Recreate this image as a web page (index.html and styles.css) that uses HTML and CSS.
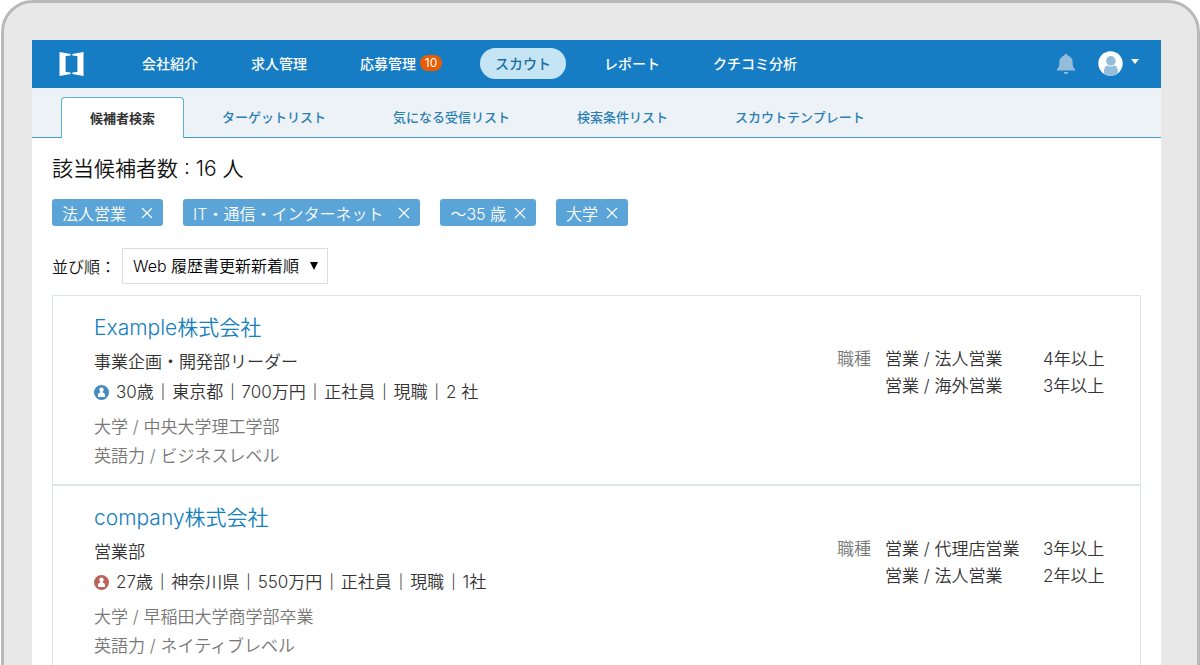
FILE: index.html
```html
<!DOCTYPE html>
<html lang="ja">
  <head>
    <title>候補者検索</title>
    <meta charset="UTF-8">
    <meta name="viewport" content="width=device-width, initial-scale=1">
    <link rel="stylesheet" href="styles.css">
  </head>
  <body>
    <div class="device">
      <div class="screen">
        <header class="topbar">
          <a class="logo" href="#" aria-label="ホーム">
            <svg width="25" height="24" viewBox="0 0 25 24" fill="#fff">
              <path d="M0.5 0 L11.6 2 V3.4 L6.6 4 V20 L11.6 20.6 V22 L0.5 24 Z"/>
              <path d="M24.5 0 L13.4 2 V3.4 L18.4 4 V20 L13.4 20.6 V22 L24.5 24 Z"/>
            </svg>
          </a>
          <nav class="nav">
            <a href="#">会社紹介</a>
            <a href="#">求人管理</a>
            <a href="#">応募管理<span class="badge">10</span></a>
            <a class="current" href="#">スカウト</a>
            <a href="#">レポート</a>
            <a href="#">クチコミ分析</a>
          </nav>
          <div class="tools">
            <button class="bell" type="button" aria-label="お知らせ">
              <svg width="20" height="22" viewBox="0 0 20 22" fill="#93bddb">
                <path d="M10 1 C11 1 11.6 1.6 11.6 2.6 C14.9 3.4 16.6 6 16.6 9.2 C16.6 13 17.2 14.6 19 16 V17.4 H1 V16 C2.8 14.6 3.4 13 3.4 9.2 C3.4 6 5.1 3.4 8.4 2.6 C8.4 1.6 9 1 10 1 Z"/>
                <path d="M7.8 19 H12.2 C12 20.4 11.2 21 10 21 C8.8 21 8 20.4 7.8 19 Z"/>
              </svg>
            </button>
            <button class="account" type="button" aria-label="アカウント">
              <svg width="25" height="25" viewBox="0 0 25 25">
                <circle cx="12.5" cy="12.5" r="12.2" fill="#fff"/>
                <circle cx="12.9" cy="9.9" r="4.8" fill="#93bddb"/>
                <path d="M6 22.7 C5.6 18 7 14.6 9.6 14.4 C11.6 15.9 14.2 15.9 16.2 14.4 C18.8 14.6 20.4 18 19.8 22.3 C16 25.3 9.6 25.5 6 22.7 Z" fill="#93bddb"/>
              </svg>
              <svg class="caret" width="8" height="5" viewBox="0 0 8 5" fill="#fff"><path d="M0 0 H8 L4 5 Z"/></svg>
            </button>
          </div>
        </header>

        <nav class="tabs">
          <a class="active" href="#">候補者検索</a>
          <a href="#">ターゲットリスト</a>
          <a href="#">気になる受信リスト</a>
          <a href="#">検索条件リスト</a>
          <a href="#">スカウトテンプレート</a>
        </nav>

        <main class="content">
          <h1>該当候補者数 : 16 人</h1>

          <div class="tags">
            <span class="tag wide">法人営業<button type="button" aria-label="法人営業を外す"><svg width="12" height="12" viewBox="0 0 12 12"><path d="M1 1 L11 11 M11 1 L1 11"/></svg></button></span>
            <span class="tag wide">IT・通信・インターネット<button type="button" aria-label="IT・通信・インターネットを外す"><svg width="12" height="12" viewBox="0 0 12 12"><path d="M1 1 L11 11 M11 1 L1 11"/></svg></button></span>
            <span class="tag">〜35 歳<button type="button" aria-label="〜35歳を外す"><svg width="12" height="12" viewBox="0 0 12 12"><path d="M1 1 L11 11 M11 1 L1 11"/></svg></button></span>
            <span class="tag">大学<button type="button" aria-label="大学を外す"><svg width="12" height="12" viewBox="0 0 12 12"><path d="M1 1 L11 11 M11 1 L1 11"/></svg></button></span>
          </div>

          <div class="sort">
            <label for="sort">並び順：</label>
            <div class="select">
              <select id="sort">
                <option>Web 履歴書更新新着順</option>
              </select>
              <svg width="8" height="8" viewBox="0 0 8 8"><path d="M0 0 H8 L4 8 Z"/></svg>
            </div>
          </div>

          <div class="list">
            <article class="card">
              <div class="person">
                <h2><a href="#">Example株式会社</a></h2>
                <p class="role">事業企画・開発部リーダー</p>
                <p class="facts">
                  <svg width="15" height="15" viewBox="0 0 15 15"><circle cx="7.5" cy="7.5" r="7.5" fill="#458bbd"/><circle cx="7.5" cy="4.7" r="2.2" fill="#fff"/><path d="M6.2 6.4 H8.8 V7.4 C10.4 7.8 11 8.8 11 10.2 V12 H4 V10.2 C4 8.8 4.6 7.8 6.2 7.4 Z" fill="#fff"/></svg>
                  <span>30歳</span><i>|</i><span>東京都</span><i>|</i><span>700万円</span><i>|</i><span>正社員</span><i>|</i><span>現職</span><i>|</i><span>2 社</span>
                </p>
                <p class="sub">大学 / 中央大学理工学部</p>
                <p class="sub">英語力 / ビジネスレベル</p>
              </div>
              <table class="jobs">
                <tr><th rowspan="2" scope="rowgroup">職種</th><td>営業 / 法人営業</td><td>4年以上</td></tr>
                <tr><td>営業 / 海外営業</td><td>3年以上</td></tr>
              </table>
            </article>

            <article class="card">
              <div class="person">
                <h2><a href="#">company株式会社</a></h2>
                <p class="role">営業部</p>
                <p class="facts">
                  <svg width="15" height="15" viewBox="0 0 15 15"><circle cx="7.5" cy="7.5" r="7.5" fill="#b9645a"/><circle cx="7.5" cy="4.7" r="2.2" fill="#fff"/><path d="M6.2 6.4 H8.8 V7.4 C10.4 7.8 11 8.8 11 10.2 V12 H4 V10.2 C4 8.8 4.6 7.8 6.2 7.4 Z" fill="#fff"/></svg>
                  <span>27歳</span><i>|</i><span>神奈川県</span><i>|</i><span>550万円</span><i>|</i><span>正社員</span><i>|</i><span>現職</span><i>|</i><span>1社</span>
                </p>
                <p class="sub">大学 / 早稲田大学商学部卒業</p>
                <p class="sub">英語力 / ネイティブレベル</p>
              </div>
              <table class="jobs">
                <tr><th rowspan="2" scope="rowgroup">職種</th><td>営業 / 代理店営業</td><td>3年以上</td></tr>
                <tr><td>営業 / 法人営業</td><td>2年以上</td></tr>
              </table>
            </article>
          </div>
        </main>
      </div>
    </div>
  </body>
</html>
```
FILE: styles.css
```css
* {
  box-sizing: border-box;
}
body {
  margin: 0;
  background: #fff;
  font-family: Inter, "Noto Sans CJK JP", sans-serif;
  font-size: 16px;
  font-weight: 350;
  color: #333;
}
a {
  text-decoration: none;
}
button {
  padding: 0;
  border: 0;
  background: none;
  cursor: pointer;
}
h1, h2, p {
  margin: 0;
  font-weight: inherit;
}
svg {
  display: block;
  flex: none;
}

/* tablet frame */
.device {
  margin-left: 1px;
  padding: 37px 36px 40px 28px;
  border: 3px solid #b9b9b9;
  border-radius: 32px;
  background: #e8e8e8;
}
.screen {
  background: #fff;
}

/* header */
.topbar {
  display: flex;
  align-items: center;
  height: 48px;
  padding: 0 22px 1px 27px;
  background: #167dc5;
}
.nav {
  display: flex;
  gap: 23px;
  margin-left: 43px;
}
.nav a {
  display: flex;
  align-items: center;
  height: 31px;
  padding: 0 15px 2px;
  border-radius: 16px;
  font-size: 14px;
  font-weight: 500;
  color: #fff;
  white-space: nowrap;
}
.nav .current {
  background: #c5e5f4;
  color: #1b6f9f;
}
.badge {
  width: 22px;
  margin-left: 4px;
  border-radius: 8px;
  background: #eb5b00;
  font-size: 12px;
  font-weight: 400;
  line-height: 16px;
  text-align: center;
}
.tools {
  display: flex;
  align-items: center;
  gap: 22px;
  margin-left: auto;
}
.account {
  display: flex;
  align-items: center;
  gap: 8px;
}
.caret {
  margin-bottom: 4px;
}

/* sub navigation */
.tabs {
  display: flex;
  align-items: flex-end;
  gap: 67px;
  height: 50px;
  padding-left: 29px;
  border-bottom: 1px solid #3f9ccf;
  background: #edf2f6;
}
.tabs a {
  font-size: 13px;
  font-weight: 500;
  line-height: 40px;
  color: #2a7fb3;
  white-space: nowrap;
}
.tabs .active {
  margin: 0 -29px -1px 0;
  padding: 0 28px;
  border: 1px solid #5fb0d8;
  border-bottom: 0;
  border-radius: 4px 4px 0 0;
  background: #fff;
  font-weight: 700;
  color: #333;
}

/* search result */
.content {
  padding: 16px 20px 0;
}
h1 {
  font-size: 21px;
  line-height: 30px;
  color: #111;
}
.tags {
  display: flex;
  gap: 20px;
  margin-top: 15px;
}
.tag {
  display: flex;
  align-items: center;
  gap: 8px;
  height: 27px;
  padding: 0 10px;
  border-radius: 3px;
  background: #5aa4d7;
  color: #fff;
  white-space: nowrap;
}
.tag.wide {
  gap: 15px;
}
.tag path {
  stroke: #fff;
  stroke-width: 1.2;
}
.sort {
  display: flex;
  align-items: center;
  gap: 6px;
  margin-top: 22px;
  color: #111;
}
.select {
  position: relative;
}
.select select {
  width: 206px;
  height: 36px;
  padding: 0 10px;
  border: 1px solid #ddd;
  border-radius: 0;
  background: #fff;
  font: inherit;
  color: #000;
  appearance: none;
}
.select svg {
  position: absolute;
  top: 14px;
  right: 10px;
  pointer-events: none;
}

/* candidates */
.list {
  margin-top: 11px;
  border: 1px solid #dde5eb;
}
.card {
  display: flex;
  justify-content: space-between;
  align-items: flex-start;
  padding: 17px 35px 13px 41px;
}
.card + .card {
  border-top: 2px solid #dde5eb;
}
.card h2 {
  font-size: 21px;
  line-height: 30px;
}
.card h2 a {
  color: #1580bd;
}
.role, .facts, .sub, .jobs {
  font-size: 17px;
}
.role {
  margin-top: 5px;
  line-height: 29px;
}
.facts {
  display: flex;
  align-items: center;
  gap: 7px;
  margin-bottom: 6px;
  line-height: 30px;
}
.facts i {
  font-size: 14px;
  font-style: normal;
}
.sub {
  line-height: 29px;
  color: #777;
}
.jobs {
  margin-top: 33px;
  border-collapse: collapse;
  line-height: 27px;
}
.jobs th, .jobs td {
  padding: 0;
  font-weight: inherit;
  text-align: left;
  vertical-align: top;
  white-space: nowrap;
}
.jobs th {
  width: 48px;
  color: #777;
}
.jobs td {
  width: 158px;
}
.jobs td:last-child {
  width: 62px;
}
```
